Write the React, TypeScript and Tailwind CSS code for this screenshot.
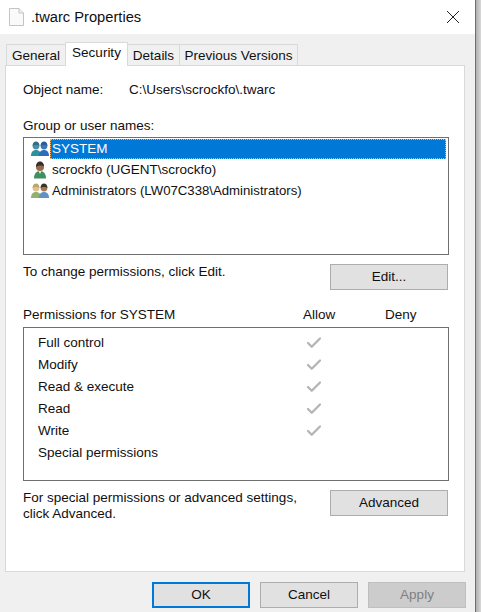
import { Check } from "lucide-react";

const TABS = [
  { label: "General", width: "w-[60px]" },
  { label: "Security", width: "w-[63px]" },
  { label: "Details", width: "w-[53px]" },
  { label: "Previous Versions", width: "w-[119px]" },
];
const PERMISSIONS = [
  { name: "Full control", allow: true },
  { name: "Modify", allow: true },
  { name: "Read & execute", allow: true },
  { name: "Read", allow: true },
  { name: "Write", allow: true },
  { name: "Special permissions", allow: false },
];

const Person = ({ x, skin, hair, shirt }: { x: number; skin: string; hair: string; shirt: string }) => (
  <g transform={`translate(${x} 0)`}>
    <path d="M0 15c0-4 2-6 5-6s5 2 5 6z" fill={shirt} />
    <circle cx="5" cy="5" r="3.4" fill={skin} />
    <path d="M1.6 5c0-3 1.6-4.4 3.4-4.4S8.4 2 8.4 5C7 3.5 3 3.500 1.6 5z" fill={hair} />
  </g>
);

const SystemIcon = () => (
  <svg width="18" height="16" viewBox="0 0 18 16">
    <Person x={0} skin="#4a90a8" hair="#2f7088" shirt="#2f8f9a" />
    <Person x={8} skin="#3f78b8" hair="#2a5c9c" shirt="#2b6cc0" />
  </svg>
);

const UserIcon = () => (
  <svg width="18" height="18" viewBox="0 0 14 18">
    <path d="M1 17.5c0-5 2.500-7.500 6-7.500s6 2.500 6 7.500z" fill="#3f8f62" />
    <path d="M5.500 10h3l-1.500 3z" fill="#e8efe8" />
    <circle cx="7" cy="6" r="4" fill="#9a6a48" />
    <path d="M3 6c0-4 2-5.500 4-5.500S11 2 11 5.500C9 4 5 4 3 6z" fill="#33302c" />
  </svg>
);

const AdminsIcon = () => (
  <svg width="18" height="16" viewBox="0 0 18 16">
    <Person x={0} skin="#e0c08e" hair="#b9a768" shirt="#93b070" />
    <Person x={8} skin="#a87850" hair="#3a3430" shirt="#5f93c4" />
  </svg>
);

const FileIcon = () => (
  <svg width="15" height="18" viewBox="0 0 15 18">
    <path d="M.5.5h9.500l4.500 4.500v12.500H.5z" fill="#fafafa" stroke="#c4c4c4" />
    <path d="M10 .5v4.500h4.500" fill="#f0f0f0" stroke="#c4c4c4" />
  </svg>
);

const Btn = ({ label, className = "" }: { label: string; className?: string }) => (
  <button className={`h-[26px] w-[118px] border border-[#adadad] bg-[#e1e1e1] text-[#101010] ${className}`}>
    {label}
  </button>
);

export default function App() {
  return (
    <div className="flex h-[612px] w-[481px] overflow-hidden bg-white font-['Liberation_Sans',Arial,sans-serif] text-[13.5px] leading-[18px] text-[#101010]">
      <div className="h-full w-[476px] border-r border-[#2b7fd0] bg-[#f0f0f0]">
        {/* title bar */}
        <div className="flex h-[34px] items-center bg-white pl-[9px] pr-[15px]">
          <FileIcon />
          <span className="ml-[7px] text-[14.7px]">.twarc Properties</span>
          <svg className="ml-auto" width="14" height="14" viewBox="0 0 14 14">
            <path d="M1 1l12 12M13 1L1 13" stroke="#222" strokeWidth="1" fill="none" />
          </svg>
        </div>

        <div className="px-[5px] pt-[8px]">
          {/* tabs */}
          <div className="flex h-[23px] items-end pl-[2px]">
            {TABS.map((t) =>
              t.label === "Security" ? (
                <div key={t.label} className={`relative z-10 -mb-px -ml-px flex h-[24px] items-center justify-center border border-b-0 border-[#d9d9d9] bg-white pb-[3px] ${t.width}`}>
                  {t.label}
                </div>
              ) : (
                <div key={t.label} className={`-ml-px flex h-[21px] items-center justify-center border border-b-0 border-[#d9d9d9] bg-[#f0f0f0] pt-[2px] ${t.width}`}>
                  {t.label}
                </div>
              ),
            )}
          </div>

          {/* panel */}
          <div className="flex h-[507px] w-[460px] flex-col border border-[#d9d9d9] bg-white pl-[17px] pr-[17px] pt-[15px]">
            <div className="flex h-[18px] items-center">
              <span className="w-[106px]">Object name:</span>
              <span>C:\Users\scrockfo\.twarc</span>
            </div>

            <div className="mt-[18px]">Group or user names:</div>
            <div className="mt-[2px] h-[118px] w-[426px] border border-[#707070] pl-[5px] pr-[2px] py-px">
              <div className="flex h-[20px] items-center">
                <span className="flex w-[21px] justify-center"><SystemIcon /></span>
                <span className="flex h-[20px] flex-1 items-center border border-dotted border-[#f5b070] bg-[#0078d7] pl-px text-white">SYSTEM</span>
              </div>
              <div className="mt-px flex h-[20px] items-center">
                <span className="flex w-[21px] justify-center"><UserIcon /></span>
                <span className="pl-[2px]">scrockfo (UGENT\scrockfo)</span>
              </div>
              <div className="mt-px flex h-[20px] items-center">
                <span className="flex w-[21px] justify-center"><AdminsIcon /></span>
                <span className="pl-[2px] text-[13.2px]">Administrators (LW07C338\Administrators)</span>
              </div>
            </div>

            <div className="mt-[9px] flex h-[26px] w-[425px] items-start justify-between">
              <span className="-mt-px">To change permissions, click Edit.</span>
              <Btn label="Edit..." />
            </div>

            <div className="mt-[16px] flex h-[18px] w-[426px] items-center">
              <span className="w-[280px]">Permissions for SYSTEM</span>
              <span className="w-[82px]">Allow</span>
              <span>Deny</span>
            </div>
            <div className="mt-[3px] h-[154px] w-[426px] border border-[#707070] pl-[14px] pt-[4px]">
              {PERMISSIONS.map((p) => (
                <div key={p.name} className="flex h-[22px] items-center">
                  <span className="w-[267px]">{p.name}</span>
                  {p.allow && <Check size={18} strokeWidth={3} className="text-[#b4b4b4]" />}
                </div>
              ))}
            </div>

            <div className="mt-[9px] flex w-[425px] items-start justify-between">
              <span className="leading-[16px]">
                For special permissions or advanced settings,
                <br />
                click Advanced.
              </span>
              <Btn label="Advanced" />
            </div>
          </div>

          {/* footer */}
          <div className="mt-[10px] flex justify-end gap-[10px] pr-[4px]">
            <button className="h-[26px] w-[98px] border-2 border-[#0078d7] bg-[#e1e1e1]">OK</button>
            <button className="h-[26px] w-[98px] border border-[#adadad] bg-[#e1e1e1]">Cancel</button>
            <button className="h-[26px] w-[98px] border border-[#bfbfbf] bg-[#cccccc] text-[#808080]">Apply</button>
          </div>
        </div>
      </div>
      {/* window behind */}
      <div className="h-full flex-1 bg-gradient-to-r from-[#b0b0b0] to-[#d8d8d8]" />
    </div>
  );
}
